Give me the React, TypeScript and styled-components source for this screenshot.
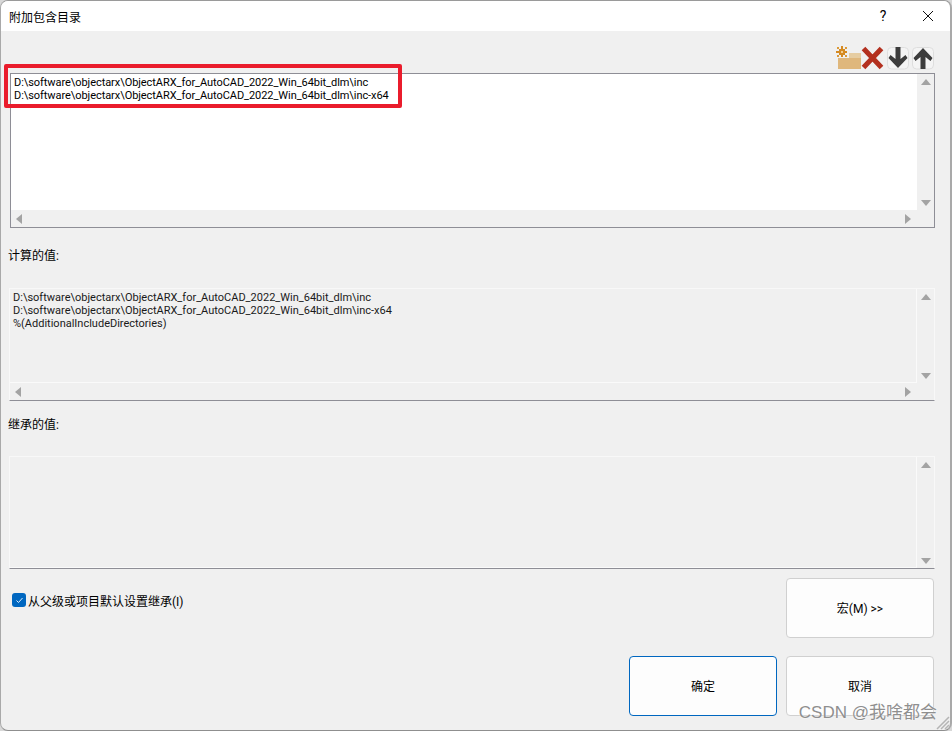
import * as React from "react";
import styled, { createGlobalStyle } from "styled-components";

const GlobalStyle = createGlobalStyle`
  html, body {
    margin: 0;
    padding: 0;
    background: #d8d8d8;
  }
  body {
    font-family: "Roboto", "Noto Sans CJK SC", sans-serif;
    font-size: 12px;
    color: #000;
  }
`;

const DialogWindow = styled.div`
  position: relative;
  box-sizing: border-box;
  width: 952px;
  height: 731px;
  overflow: hidden;
  display: flex;
  flex-direction: column;
  background: #f0f0f0;
  border-left: 1px solid #a9a9a9;
  border-right: 2px solid #a9a9a9;
  border-bottom: 1px solid #8f8f8f;
  border-top: 1px solid #9a9a9a;
  border-radius: 8px;
`;

const TitleBar = styled.div`
  flex: none;
  height: 30px;
  display: flex;
  align-items: center;
  background: #fff;
  padding-left: 8px;
`;

const Title = styled.div`
  flex: 1;
  font-size: 12px;
`;

const HelpButton = styled.div`
  width: 46px;
  text-align: center;
  font-size: 14px;
`;

const CloseButton = styled.div`
  width: 44px;
  display: flex;
  justify-content: center;
`;

const Body = styled.div`
  flex: 1;
  display: flex;
  flex-direction: column;
  padding: 12px 15px 0 7px;
`;

const Toolbar = styled.div`
  display: flex;
  justify-content: flex-end;
  align-items: flex-start;
  height: 30px;
  margin-right: 1px;
`;

const Panel = styled.div<{ $height: number; $disabled?: boolean; $noHorizontal?: boolean }>`
  box-sizing: border-box;
  height: ${(p) => p.$height}px;
  margin-left: ${(p) => (p.$disabled ? 1 : 2)}px;
  display: grid;
  grid-template-columns: 1fr 17px;
  grid-template-rows: ${(p) => (p.$noHorizontal ? "1fr" : "1fr 17px")};
  background: #f0f0f0;
  border: 1px solid ${(p) => (p.$disabled ? "#f8f8f8" : "#8e8e96")};
  border-bottom-color: #8e8e96;
`;

const PanelText = styled.div<{ $disabled?: boolean }>`
  padding: 2px 3px;
  font-size: 11px;
  line-height: 13px;
  white-space: pre;
  letter-spacing: ${(p) => (p.$disabled ? "0" : "-0.06px")};
  color: ${(p) => (p.$disabled ? "#1a1a1a" : "#000")};
  background: ${(p) => (p.$disabled ? "#f0f0f0" : "#fff")};
  border-right: ${(p) => (p.$disabled ? "1px solid #fafafa" : "none")};
  border-bottom: ${(p) => (p.$disabled ? "1px solid #fafafa" : "none")};
`;

const VerticalBar = styled.div`
  display: flex;
  flex-direction: column;
  justify-content: space-between;
  align-items: center;
  padding: 5px 0 4px;
`;

const HorizontalBar = styled.div`
  display: flex;
  justify-content: space-between;
  align-items: center;
  padding: 0 6px 0 5px;
`;

const Corner = styled.div``;

const arrowBorders = {
  up: "border-width: 0 5px 6px; border-color: transparent transparent #a3a3a3;",
  down: "border-width: 6px 5px 0; border-color: #a3a3a3 transparent transparent;",
  left: "border-width: 5px 6px 5px 0; border-color: transparent #a3a3a3 transparent transparent;",
  right: "border-width: 5px 0 5px 6px; border-color: transparent transparent transparent #a3a3a3;",
};

const Arrow = styled.span<{ $dir: keyof typeof arrowBorders }>`
  display: block;
  width: 0;
  height: 0;
  border-style: solid;
  ${(p) => arrowBorders[p.$dir]}
`;

const SectionLabel = styled.div<{ $top: number; $bottom: number }>`
  margin-top: ${(p) => p.$top}px;
  margin-bottom: ${(p) => p.$bottom}px;
  height: 16px;
  line-height: 16px;
`;

const Footer = styled.div`
  display: flex;
  justify-content: space-between;
  margin-top: 9px;
  margin-right: 1px;
`;

const CheckRow = styled.label`
  display: flex;
  align-items: center;
  gap: 2px;
  height: 16px;
  margin: 14px 0 0 4px;
`;

const CheckBox = styled.span`
  width: 14px;
  height: 14px;
  border-radius: 3px;
  background: #0067c0;
  display: flex;
  align-items: center;
  justify-content: center;
`;

const ButtonColumn = styled.div`
  display: flex;
  flex-direction: column;
  align-items: flex-end;
  gap: 18px;
`;

const ButtonRow = styled.div`
  display: flex;
  gap: 9px;
`;

const DialogButton = styled.button<{ $primary?: boolean }>`
  box-sizing: border-box;
  width: 148px;
  height: 60px;
  padding: 0 0 2px;
  font: inherit;
  color: #000;
  background: #fdfdfd;
  border-radius: 4px;
  border: 1px solid ${(p) => (p.$primary ? "#0067c0" : "#d0d0d0")};
`;

const RedHighlight = styled.div`
  position: absolute;
  left: 3px;
  top: 63px;
  width: 398px;
  height: 44px;
  box-sizing: border-box;
  border: 4px solid #ea1c2c;
  border-radius: 2px;
`;

const Watermark = styled.div`
  position: absolute;
  right: 13px;
  bottom: 6px;
  font-size: 17px;
  line-height: 22px;
  color: #8f8f8f;
  text-shadow: 0 0 2px #fff;
  font-family: "Liberation Sans", "Noto Sans CJK SC", sans-serif;
`;

const ResizeGrip = styled.svg`
  position: absolute;
  right: 0;
  bottom: 0;
`;

const ToolIcon = styled.svg<{ $gap?: number }>`
  display: block;
  margin-left: ${(p) => p.$gap ?? 0}px;
`;

function NewFolderIcon() {
  return (
    <ToolIcon width="25" height="27" viewBox="0 0 25 27" shapeRendering="crispEdges">
      <path d="M2 15h23v11H2z" fill="#dfb77c" />
      <path d="M13 10h12v5H13z" fill="#e6cda2" />
      <path d="M5 3h2v11H5zM0 8h11v2H0z" fill="#d58a22" />
      <path d="M3 6h6v6H3z" fill="#d58a22" />
      <path d="M1 4h2v2H1zM9 4h2v2H9zM1 12h2v2H1zM9 12h2v2H9z" fill="#dc9a38" />
      <path d="M5 8h2v2H5z" fill="#f2cf92" />
    </ToolIcon>
  );
}

function DeleteIcon() {
  return (
    <ToolIcon width="23" height="27" viewBox="0 0 23 27">
      <path d="M2.500 5.500L20.500 24.500M20.500 5.500L2.500 24.500" stroke="#b3301f" strokeWidth="5" />
    </ToolIcon>
  );
}

function MoveIcon({ up, gap }: { up?: boolean; gap: number }) {
  return (
    <ToolIcon $gap={gap} width="22" height="27" viewBox="0 0 22 27">
      <rect x="0.500" y="4.500" width="21" height="21.500" rx="4" fill="#f4f4f4" stroke="#dedede" />
      <path
        d={
          up
            ? "M8.500 26h5V14l5 4 2-3L11 5 1.500 15l2 3 5-4z"
            : "M8.500 4h5v12l5-4 2 3-9.500 10L1.500 15l2-3 5 4z"
        }
        fill="#3c3c3c"
      />
    </ToolIcon>
  );
}

function ScrollBars({ noHorizontal }: { noHorizontal?: boolean }) {
  return (
    <>
      <VerticalBar>
        <Arrow $dir="up" />
        <Arrow $dir="down" />
      </VerticalBar>
      {noHorizontal ? null : (
        <>
          <HorizontalBar>
            <Arrow $dir="left" />
            <Arrow $dir="right" />
          </HorizontalBar>
          <Corner />
        </>
      )}
    </>
  );
}

const includePaths =
  "D:\\software\\objectarx\\ObjectARX_for_AutoCAD_2022_Win_64bit_dlm\\inc\nD:\\software\\objectarx\\ObjectARX_for_AutoCAD_2022_Win_64bit_dlm\\inc-x64";

export default function App() {
  return (
    <>
      <GlobalStyle />
      <DialogWindow>
        <TitleBar>
          <Title>附加包含目录</Title>
          <HelpButton>?</HelpButton>
          <CloseButton>
            <svg width="12" height="12" viewBox="0 0 12 12">
              <path d="M1 1l10 10M11 1L1 11" stroke="#111" strokeWidth="1" />
            </svg>
          </CloseButton>
        </TitleBar>
        <Body>
          <Toolbar>
            <NewFolderIcon />
            <DeleteIcon />
            <MoveIcon gap={3} />
            <MoveIcon up gap={3} />
          </Toolbar>
          <Panel $height={155}>
            <PanelText>{includePaths}</PanelText>
            <ScrollBars />
          </Panel>
          <SectionLabel $top={20} $bottom={24}>计算的值:</SectionLabel>
          <Panel $height={113} $disabled>
            <PanelText $disabled>{includePaths + "\n%(AdditionalIncludeDirectories)"}</PanelText>
            <ScrollBars />
          </Panel>
          <SectionLabel $top={16} $bottom={23}>继承的值:</SectionLabel>
          <Panel $height={113} $disabled $noHorizontal>
            <PanelText $disabled />
            <ScrollBars noHorizontal />
          </Panel>
          <Footer>
            <CheckRow>
              <CheckBox>
                <svg width="9" height="9" viewBox="0 0 9 9">
                  <path d="M1.500 4.500l2 2 4-4.500" stroke="#dceeff" strokeWidth="1" fill="none" />
                </svg>
              </CheckBox>
              从父级或项目默认设置继承(I)
            </CheckRow>
            <ButtonColumn>
              <DialogButton>宏(M) &gt;&gt;</DialogButton>
              <ButtonRow>
                <DialogButton $primary>确定</DialogButton>
                <DialogButton>取消</DialogButton>
              </ButtonRow>
            </ButtonColumn>
          </Footer>
        </Body>
        <RedHighlight />
        <Watermark>CSDN @我啥都会</Watermark>
        <ResizeGrip width="16" height="16" viewBox="0 0 16 16">
          <path d="M15 3L3 15M15 7l-8 8M15 11l-4 4" stroke="#b5b5b5" strokeWidth="1.500" />
        </ResizeGrip>
      </DialogWindow>
    </>
  );
}
